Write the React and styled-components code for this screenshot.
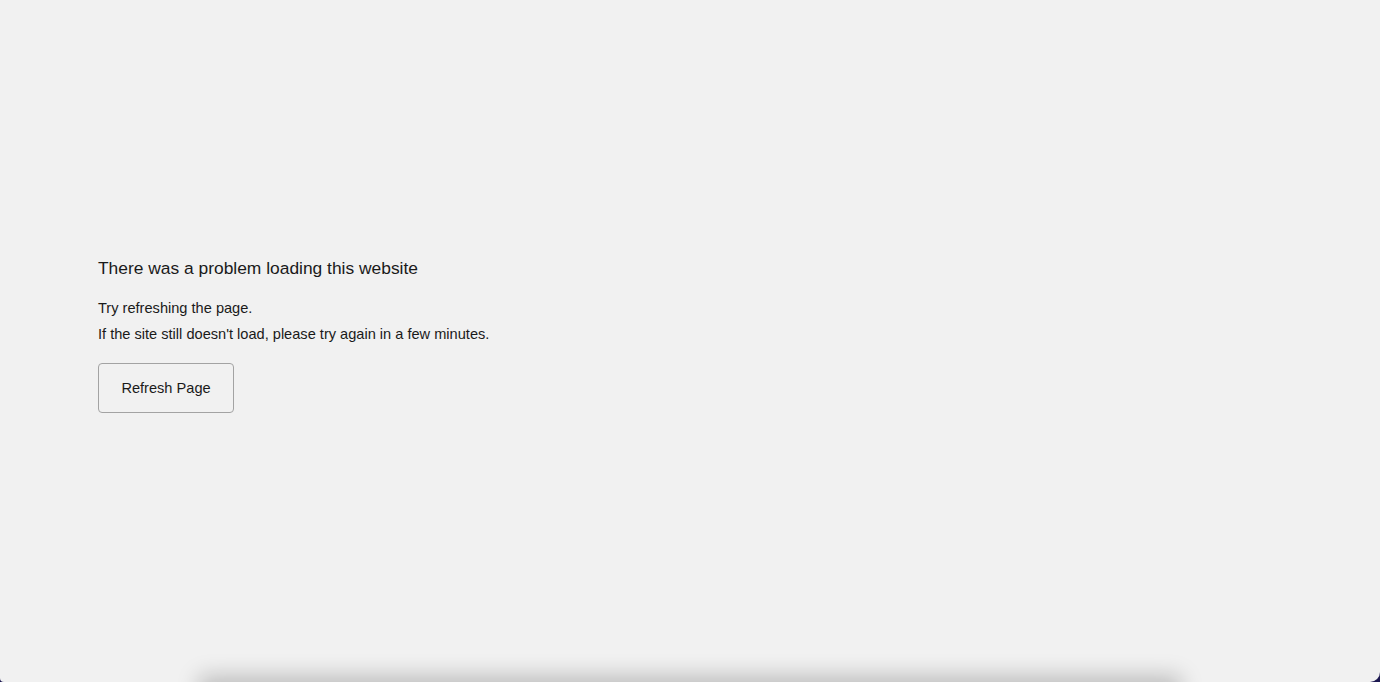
import React from "react";
import styled, { createGlobalStyle } from "styled-components";

const GlobalStyle = createGlobalStyle`
  html, body {
    margin: 0;
    padding: 0;
    height: 100%;
    background: #1c1850;
  }
  #root {
    height: 100%;
  }
`;

const PageStyled = styled.div`
  position: relative;
  height: 682px;
  box-sizing: border-box;
  background-color: #f1f1f1;
  border-bottom-left-radius: 4px;
  border-bottom-right-radius: 10px;
  overflow: hidden;
  display: flex;
  flex-direction: column;
  justify-content: center;
  padding: 0 0 13px 98px;
  font-family: "Liberation Sans", Arial, sans-serif;
  color: #1a1a1a;
`;

const TitleStyled = styled.h1`
  margin: 0 0 15px;
  font-size: 17.4px;
  font-weight: normal;
  line-height: 24px;
`;

const MessageStyled = styled.p`
  margin: 0;
  font-size: 14.6px;
  line-height: 26px;
`;

const RefreshButtonStyled = styled.button`
  margin-top: 16px;
  width: 136px;
  height: 50px;
  box-sizing: border-box;
  background: transparent;
  border: 1px solid #a3a3a3;
  border-radius: 4px;
  font-family: "Liberation Sans", Arial, sans-serif;
  font-size: 14.6px;
  color: #1a1a1a;
  cursor: pointer;
  padding: 0;
`;

const BottomShadowStyled = styled.div`
  position: absolute;
  left: 205px;
  right: 205px;
  bottom: -20px;
  height: 20px;
  box-shadow: 0 0 22px 6px rgba(0, 0, 0, 0.22);
`;

const App = () => {
  return (
    <>
      <GlobalStyle />
      <PageStyled>
        <TitleStyled>There was a problem loading this website</TitleStyled>
        <MessageStyled>Try refreshing the page.</MessageStyled>
        <MessageStyled>
          If the site still doesn't load, please try again in a few minutes.
        </MessageStyled>
        <div>
          <RefreshButtonStyled onClick={() => window.location.reload()}>
            Refresh Page
          </RefreshButtonStyled>
        </div>
        <BottomShadowStyled />
      </PageStyled>
    </>
  );
};

export default App;
